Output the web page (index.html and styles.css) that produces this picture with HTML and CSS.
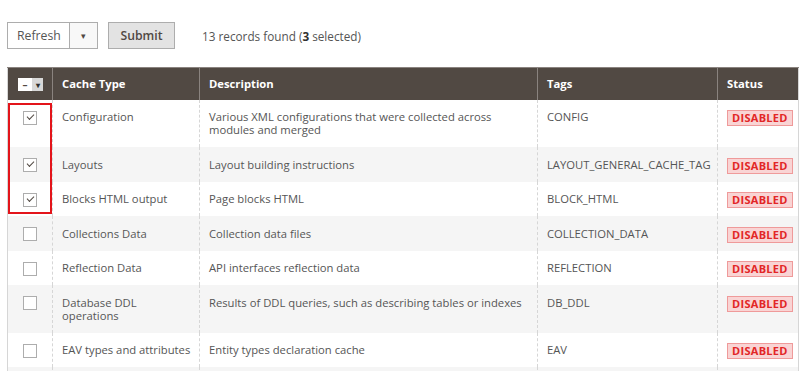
FILE: index.html
```html
<!DOCTYPE html>
<html lang="en">
<head>
  <meta charset="UTF-8">
  <title>Cache Management</title>
  <link rel="stylesheet" href="styles.css">
</head>
<body>
  <div class="toolbar">
    <div class="aksi">
      <span class="aksi-label">Refresh</span>
      <span class="aksi-panah">&#9662;</span>
    </div>
    <button class="tombol">Submit</button>
    <span class="jumlah">13 records found (<b>3</b> selected)</span>
  </div>

  <div class="wadah-tabel">
    <table class="tabel">
      <thead>
        <tr>
          <th class="kol-cek">
            <span class="pilih-massal"><span class="pm-kiri">&ndash;</span><span class="pm-kanan">&#9662;</span></span>
          </th>
          <th class="kol-tipe">Cache Type</th>
          <th class="kol-desk">Description</th>
          <th class="kol-tag">Tags</th>
          <th class="kol-status">Status</th>
        </tr>
      </thead>
      <tbody>
        <tr>
          <td class="kol-cek"><span class="cek aktif"></span></td>
          <td>Configuration</td>
          <td>Various XML configurations that were collected across modules and merged</td>
          <td>CONFIG</td>
          <td><span class="status">DISABLED</span></td>
        </tr>
        <tr>
          <td class="kol-cek"><span class="cek aktif"></span></td>
          <td>Layouts</td>
          <td>Layout building instructions</td>
          <td>LAYOUT_GENERAL_CACHE_TAG</td>
          <td><span class="status">DISABLED</span></td>
        </tr>
        <tr>
          <td class="kol-cek"><span class="cek aktif"></span></td>
          <td>Blocks HTML output</td>
          <td>Page blocks HTML</td>
          <td>BLOCK_HTML</td>
          <td><span class="status">DISABLED</span></td>
        </tr>
        <tr>
          <td class="kol-cek"><span class="cek"></span></td>
          <td>Collections Data</td>
          <td>Collection data files</td>
          <td>COLLECTION_DATA</td>
          <td><span class="status">DISABLED</span></td>
        </tr>
        <tr>
          <td class="kol-cek"><span class="cek"></span></td>
          <td>Reflection Data</td>
          <td>API interfaces reflection data</td>
          <td>REFLECTION</td>
          <td><span class="status">DISABLED</span></td>
        </tr>
        <tr>
          <td class="kol-cek"><span class="cek"></span></td>
          <td>Database DDL operations</td>
          <td>Results of DDL queries, such as describing tables or indexes</td>
          <td>DB_DDL</td>
          <td><span class="status">DISABLED</span></td>
        </tr>
        <tr>
          <td class="kol-cek"><span class="cek"></span></td>
          <td>EAV types and attributes</td>
          <td>Entity types declaration cache</td>
          <td>EAV</td>
          <td><span class="status">DISABLED</span></td>
        </tr>
        <tr class="baris-kosong">
          <td></td><td></td><td></td><td></td><td></td>
        </tr>
      </tbody>
    </table>
    <div class="sorot"></div>
  </div>
</body>
</html>
```

FILE: styles.css
```css
body {
  margin: 0;
  padding: 22px 0 0 7px;
  background: #fff;
  font-family: "Open Sans", Arial, sans-serif;
  font-size: 11.25px;
  color: #555;
  overflow: hidden;
}
.toolbar {
  display: flex;
  align-items: center;
  height: 27px;
  margin-bottom: 18px;
}
.aksi {
  display: flex;
  height: 25px;
  border: 1px solid #adadad;
  background: #fff;
  margin-right: 10px;
}
.aksi-label {
  display: flex;
  align-items: center;
  width: 52px;
  padding-left: 9px;
  font-size: 12.25px;
  color: #555;
  border-right: 1px solid #adadad;
}
.aksi-panah {
  display: flex;
  align-items: center;
  justify-content: center;
  width: 27px;
  font-size: 9px;
  color: #514943;
  background: #f8f8f8;
}
.tombol {
  height: 27px;
  width: 67px;
  padding: 0;
  margin-right: 27px;
  border: 1px solid #adadad;
  background: #e3e3e3;
  color: #514943;
  font-family: inherit;
  font-size: 12.25px;
  font-weight: 600;
}
.jumlah {
  font-size: 11.75px;
  color: #555;
}
.jumlah b {
  color: #303030;
}

.wadah-tabel {
  position: relative;
  width: 792px;
}
.tabel {
  width: 792px;
  border-collapse: collapse;
  table-layout: fixed;
  border-left: 1px solid #d6d6d6;
  border-right: 1px solid #d6d6d6;
}
.tabel th {
  height: 32px;
  padding: 0 9px;
  box-sizing: border-box;
  background: #514943;
  color: #fff;
  font-weight: 700;
  font-size: 11.25px;
  text-align: left;
  border-left: 1px solid #8a837f;
  border-top: 1px solid #8a837f;
}
.tabel th:first-child {
  border-left: none;
}
.tabel td {
  padding: 10.5px 6px 11px 9px;
  line-height: 13px;
  vertical-align: top;
  border-left: 1px dashed #d6d6d6;
}
.tabel td:first-child {
  border-left: none;
}
.tabel tbody tr:nth-child(even) td {
  background: #f5f5f5;
}
.baris-kosong td {
  height: 13px;
}
.kol-cek { width: 45px; }
.kol-tipe { width: 147px; }
.kol-desk { width: 338px; }
.kol-tag { width: 180px; }
.tabel td.kol-cek,
.tabel th.kol-cek {
  text-align: center;
  padding: 0;
}
.tabel td.kol-cek {
  padding-top: 10.5px;
}
.pilih-massal {
  display: inline-flex;
  vertical-align: middle;
  height: 13px;
  margin-left: 1px;
}
.pm-kiri {
  width: 14px;
  background: #fff;
  color: #514943;
  font-size: 10px;
  line-height: 13px;
  text-align: center;
}
.pm-kanan {
  width: 11px;
  background: #d8d8d8;
  color: #303030;
  font-size: 8px;
  line-height: 13px;
  text-align: center;
}
.cek {
  display: inline-block;
  box-sizing: border-box;
  width: 14px;
  height: 14px;
  margin: 0.5px 0 -4px;
  border: 1px solid #adadad;
  background: #fff;
  position: relative;
  vertical-align: top;
}
.cek.aktif::after {
  content: "";
  position: absolute;
  left: 3px;
  top: 2px;
  width: 6px;
  height: 3px;
  border-left: 1.5px solid #514943;
  border-bottom: 1.5px solid #514943;
  transform: rotate(-45deg);
}
.status {
  display: inline-block;
  box-sizing: border-box;
  height: 16px;
  margin: 0 0 -4px;
  padding: 0 4px;
  vertical-align: top;
  background: #f9d4d4;
  border: 1px solid #ef9a9a;
  color: #e22626;
  font-weight: 700;
  font-size: 11px;
  line-height: 14px;
  letter-spacing: 0.3px;
}
.sorot {
  position: absolute;
  left: 1px;
  top: 36px;
  width: 40px;
  height: 107px;
  border: 2px solid #e3141a;
}
```
